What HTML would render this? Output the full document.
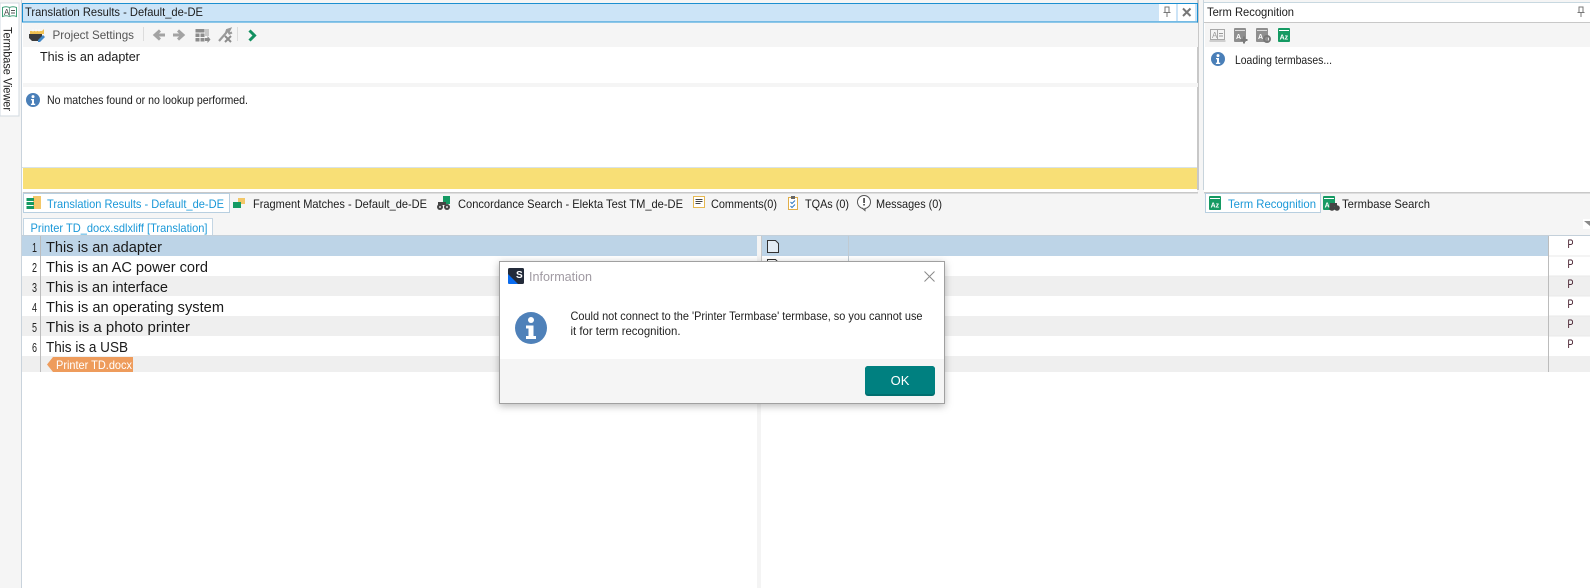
<!DOCTYPE html>
<html lang="en">
<head>
<meta charset="utf-8">
<title>Translation Results</title>
<style>
html,body{margin:0;padding:0;background:#fff;width:1590px;height:588px;overflow:hidden}
svg{display:block}
text{font-family:"Liberation Sans",sans-serif;font-size:12px;fill:#1c1c1c;white-space:pre}
.row{font-size:15px;fill:#1a1a1a}
.num{font-size:13px;fill:#222}
.blue{fill:#1a98d8}
.p{font-size:12px;fill:#3a1020}
</style>
</head>
<body>
<svg width="1590" height="588" viewBox="0 0 1590 588" xmlns="http://www.w3.org/2000/svg">
<defs>
<filter id="sh" x="-5%" y="-15%" width="110%" height="130%"><feDropShadow dx="0" dy="2" stdDeviation="4" flood-color="#000" flood-opacity=".28"/></filter>
<g id="inf"><circle cx="7" cy="7" r="7" fill="#4a7fb8"/><circle cx="7" cy="3.6" r="1.5" fill="#fff"/><path d="M5 6h3v4.600h1.200V12H4.900v-1.400H6V7.200H5z" fill="#fff"/></g>
<g id="pin"><path d="M-2.500 0h5M-2 0v5.500h4V0M-3.500 5.500h7M0 5.500v4.500" fill="none" stroke="#777" stroke-width="1"/></g>
<g id="gtb"><rect x="0" y="0" width="12" height="14" rx="1" fill="#159a63"/><rect x="1" y="2" width="10" height="1" fill="#fff"/><text x="1.600" y="11.500" style="font-size:7px;fill:#fff;font-weight:bold">Az</text></g>
</defs>

<!-- backgrounds -->
<rect width="1590" height="588" fill="#fff"/>
<rect x="0" y="0" width="21" height="588" fill="#f5f5f5"/>
<rect x="0" y="0" width="1590" height="3" fill="#f5f5f5"/>
<rect x="21" y="0" width="1" height="588" fill="#c9d3dc"/>
<rect x="1198" y="0" width="5" height="193" fill="#f5f5f5"/>
<rect x="1197" y="0" width="2" height="193" fill="#c8c8c8"/>
<rect x="1203" y="0" width="1" height="193" fill="#c8d4dc"/>

<!-- side tab -->
<rect x="0" y="3" width="19" height="113" fill="#fff" stroke="#d2dae0"/>
<path d="M2.500 7.500q3.500-1.500 7 0q3.500-1.500 7 0v9q-3.500-1.500-7 0q-3.500-1.500-7 0z" fill="#fff" stroke="#3f9f78"/>
<path d="M9.500 7.500v9" stroke="#7fa898"/>
<text x="4" y="15" style="font-size:8px;fill:#444">A</text>
<path d="M11 10.500h4M11 13h4" stroke="#555" fill="none"/>
<text transform="translate(3.500,27) rotate(90)" textLength="84" lengthAdjust="spacingAndGlyphs">Termbase Viewer</text>

<!-- Translation Results panel header -->
<rect x="22.500" y="3.500" width="1175" height="18.500" fill="#cce4f7" stroke="#1b8fd0"/>
<text x="25" y="16" textLength="178" lengthAdjust="spacingAndGlyphs">Translation Results - Default_de-DE</text>
<rect x="1159" y="4" width="17" height="17" fill="#fff"/>
<rect x="1178" y="4" width="17" height="17" fill="#fff"/>
<use href="#pin" x="1167" y="7"/>
<path d="M1183 8.500l7.500 7.500M1190.500 8.500l-7.500 7.500" stroke="#777" stroke-width="2" fill="none"/>

<!-- toolbar -->
<rect x="23" y="23" width="1175" height="24" fill="#f5f5f5"/>
<path d="M30 31h12l2-2v5H30z" fill="#f0c050"/><path d="M33 29.500v2M36 29.500v2M39 29.500v2" stroke="#fff"/>
<path d="M29 34h13v3l-2 4H32l-3-3z" fill="#3c3c3c"/>
<path d="M38 40l5-5 2 2-5 5h-2z" fill="#3f86c6"/>
<text x="52.500" y="39" textLength="81.500" lengthAdjust="spacingAndGlyphs" style="fill:#555">Project Settings</text>
<rect x="143" y="27" width="1" height="14" fill="#dcdcdc"/>
<path d="M165 35h-9M160 30.500l-5 4.500 5 4.500" fill="none" stroke="#a3a3a3" stroke-width="3"/>
<path d="M173 35h9M178 30.500l5 4.500-5 4.500" fill="none" stroke="#a3a3a3" stroke-width="3"/>
<g fill="#8c8c8c"><rect x="195.500" y="29" width="9" height="3.500"/><rect x="195.500" y="33.500" width="4" height="3.500"/><rect x="200.500" y="33.500" width="4" height="3.500"/><rect x="195.500" y="38" width="4" height="3.500"/><rect x="200.500" y="38" width="4" height="3.500"/><path d="M205 29h4v7h-4z" fill="#c8c8c8"/><path d="M205 38h2.500v-2l3 3.500-3 3.500v-2H205z"/></g>
<path d="M219 41l7-8 1-3 3-1-1.500 3 1 1.500 2.500-1" fill="none" stroke="#9a9a9a" stroke-width="2.200"/>
<path d="M225 36l6 6M231 36l-6 6" stroke="#8c8c8c" stroke-width="2"/>
<rect x="237" y="27" width="1" height="14" fill="#dcdcdc"/>
<path d="M249.500 30.500l5 5-5 5" fill="none" stroke="#129060" stroke-width="3"/>

<!-- Translation Results body -->
<text x="40" y="61" textLength="100" lengthAdjust="spacingAndGlyphs" style="font-size:13px">This is an adapter</text>
<rect x="23" y="83" width="1175" height="4" fill="#f5f5f5"/>
<use href="#inf" x="26" y="93"/>
<text x="47" y="104" textLength="201" lengthAdjust="spacingAndGlyphs">No matches found or no lookup performed.</text>
<rect x="22" y="167" width="1175" height="1" fill="#d8e3ea"/>
<rect x="23" y="168" width="1174" height="21" fill="#f8df76"/>

<!-- Term Recognition panel -->
<rect x="1204" y="3" width="386" height="19" fill="#fff"/>
<rect x="1204" y="2" width="386" height="1" fill="#c8d8e0"/>
<rect x="1204" y="22" width="386" height="1" fill="#c8c8c8"/>
<text x="1207" y="16" textLength="87" lengthAdjust="spacingAndGlyphs">Term Recognition</text>
<use href="#pin" x="1581" y="7"/>
<rect x="1205" y="23" width="385" height="24" fill="#f5f5f5"/>
<path d="M1210.500 29.500h7v10h-7zM1217.500 29.500h7v10h-7zM1209.500 41h16" fill="none" stroke="#a8a8a8"/>
<text x="1212" y="38" style="font-size:8px;fill:#999">A</text>
<path d="M1219 33.500h4M1219 36h4" stroke="#999"/>
<rect x="1234" y="28" width="12" height="14" rx="1" fill="#8f8f8f"/><rect x="1235" y="30" width="10" height="1" fill="#ddd"/>
<text x="1236" y="39" style="font-size:7px;fill:#fff;font-weight:bold">A</text>
<path d="M1243 36.500h2v2.500h2.500v2H1245v2.500h-2V41h-2.500v-2h2.500z" fill="#7a7a7a"/>
<rect x="1256" y="28" width="12" height="14" rx="1" fill="#8f8f8f"/><rect x="1257" y="30" width="10" height="1" fill="#ddd"/>
<text x="1258" y="39" style="font-size:7px;fill:#fff;font-weight:bold">A</text>
<circle cx="1267" cy="39" r="3" fill="none" stroke="#777" stroke-width="2"/>
<use href="#gtb" x="1278" y="28"/>
<use href="#inf" x="1211" y="52"/>
<text x="1235" y="64" textLength="97" lengthAdjust="spacingAndGlyphs">Loading termbases...</text>

<!-- tabs area -->
<rect x="0" y="190" width="1590" height="46" fill="#f5f5f5"/>
<rect x="21" y="190" width="1" height="46" fill="#c9d3dc"/>
<rect x="22" y="189" width="1175" height="3" fill="#fff"/>
<rect x="23" y="192" width="1175" height="1.500" fill="#c8c8c8"/>
<rect x="1204" y="190" width="386" height="3" fill="#fff"/>
<rect x="1204" y="192" width="386" height="1.500" fill="#c8c8c8"/>

<rect x="23.500" y="193.500" width="206" height="19" fill="#fff" stroke="#b8cfe0"/>
<rect x="33" y="196" width="8" height="13" fill="#f3c868"/>
<g fill="#159a63"><rect x="26.500" y="198" width="7.500" height="3"/><rect x="26.500" y="202" width="7.500" height="3"/><rect x="26.500" y="206" width="7.500" height="3"/></g>
<text x="47" y="208" textLength="177" lengthAdjust="spacingAndGlyphs" class="blue">Translation Results - Default_de-DE</text>

<rect x="238" y="198" width="7" height="6" fill="#f3c868"/><rect x="233" y="202" width="8" height="6" fill="#159a63"/>
<text x="253" y="208" textLength="174" lengthAdjust="spacingAndGlyphs">Fragment Matches - Default_de-DE</text>

<rect x="443" y="196" width="7" height="8" fill="#159a63"/>
<g fill="#444"><circle cx="440" cy="207" r="3"/><circle cx="447" cy="207" r="3"/><rect x="438" y="202" width="8" height="3"/></g>
<circle cx="440" cy="207" r="1" fill="#ddd"/><circle cx="447" cy="207" r="1" fill="#ddd"/>
<text x="458" y="208" textLength="225" lengthAdjust="spacingAndGlyphs">Concordance Search - Elekta Test TM_de-DE</text>

<rect x="693.500" y="196.500" width="11" height="11" fill="#fff" stroke="#e6b850"/>
<path d="M695.500 199.500h7M695.500 201.500h7M695.500 203.500h5" stroke="#444"/>
<text x="711" y="208" textLength="66" lengthAdjust="spacingAndGlyphs">Comments(0)</text>

<rect x="788.500" y="197.500" width="9" height="12" fill="#fff" stroke="#e0ae48"/>
<rect x="791" y="196" width="4" height="3" fill="#666"/>
<path d="M790.500 202l1.500 1.500 3-3M790.500 206l1.500 1.500 3-3" fill="none" stroke="#2f78c0"/>
<text x="805" y="208" textLength="44" lengthAdjust="spacingAndGlyphs">TQAs (0)</text>

<circle cx="864" cy="202" r="6.500" fill="#fff" stroke="#555"/>
<path d="M862 208l3 2.500v-2" fill="#fff" stroke="#555"/>
<rect x="863.300" y="198" width="1.500" height="5" fill="#333"/><rect x="863.300" y="204" width="1.500" height="1.500" fill="#333"/>
<text x="876" y="208" textLength="66" lengthAdjust="spacingAndGlyphs">Messages (0)</text>

<rect x="1205.500" y="193.500" width="115" height="19" fill="#fff" stroke="#b8cfe0"/>
<use href="#gtb" x="1209" y="196"/>
<text x="1228" y="208" textLength="88" lengthAdjust="spacingAndGlyphs" class="blue">Term Recognition</text>
<use href="#gtb" x="1323" y="196"/>
<g fill="#444"><circle cx="1332" cy="208" r="2.800"/><circle cx="1337" cy="208" r="2.800"/><rect x="1330" y="203" width="7" height="3"/></g>
<text x="1342" y="208" textLength="88" lengthAdjust="spacingAndGlyphs">Termbase Search</text>

<!-- document tab -->
<rect x="23.500" y="218.500" width="189" height="18" fill="#fff" stroke="#c4d6e4"/>
<text x="30.500" y="232" textLength="177" lengthAdjust="spacingAndGlyphs" class="blue">Printer TD_docx.sdlxliff [Translation]</text>

<rect x="1583" y="219" width="7" height="10" fill="#fff"/>
<path d="M1584 221h6v5z" fill="#8a8a8a"/>

<!-- grid -->
<rect x="22" y="235" width="1568" height="1" fill="#c4d0da"/>
<rect x="22" y="236" width="1526" height="20" fill="#bdd4e7"/>
<rect x="22" y="276" width="1568" height="20" fill="#efefef"/>
<rect x="22" y="316" width="1568" height="20" fill="#efefef"/>
<rect x="22" y="356" width="1568" height="16" fill="#efefef"/>
<rect x="40" y="236" width="1" height="136" fill="#bcbcbc"/>
<rect x="757" y="236" width="4" height="352" fill="#f4f4f4"/>
<rect x="761" y="236" width="1" height="136" fill="#c8c8c8"/>
<rect x="848" y="236" width="1" height="136" fill="#c0cad2"/>
<rect x="1548" y="236" width="1" height="136" fill="#bcbcbc"/>
<path d="M1549 256h41M1549 276h41M1549 296h41M1549 316h41M1549 336h41" stroke="#e8e8e8"/>

<path d="M767.500 240.500h8l3 3v9h-11z" fill="#e4edf5" stroke="#333"/>
<path d="M767.500 259.500h8l3 3v9h-11z" fill="#fff" stroke="#333"/>

<text class="num" x="32" y="252" textLength="5" lengthAdjust="spacingAndGlyphs">1</text>
<text class="num" x="32" y="272" textLength="5" lengthAdjust="spacingAndGlyphs">2</text>
<text class="num" x="32" y="292" textLength="5" lengthAdjust="spacingAndGlyphs">3</text>
<text class="num" x="32" y="312" textLength="5" lengthAdjust="spacingAndGlyphs">4</text>
<text class="num" x="32" y="332" textLength="5" lengthAdjust="spacingAndGlyphs">5</text>
<text class="num" x="32" y="352" textLength="5" lengthAdjust="spacingAndGlyphs">6</text>

<text class="row" x="46" y="252" textLength="116" lengthAdjust="spacingAndGlyphs">This is an adapter</text>
<text class="row" x="46" y="272" textLength="162" lengthAdjust="spacingAndGlyphs">This is an AC power cord</text>
<text class="row" x="46" y="292" textLength="122" lengthAdjust="spacingAndGlyphs">This is an interface</text>
<text class="row" x="46" y="312" textLength="178" lengthAdjust="spacingAndGlyphs">This is an operating system</text>
<text class="row" x="46" y="332" textLength="144" lengthAdjust="spacingAndGlyphs">This is a photo printer</text>
<text class="row" x="46" y="352" textLength="82" lengthAdjust="spacingAndGlyphs">This is a USB</text>

<path d="M47 364.500l6-7.500h80v15H53z" fill="#ee9c5c"/>
<text x="56" y="369" textLength="76" lengthAdjust="spacingAndGlyphs" style="fill:#fff">Printer TD.docx</text>

<text class="p" x="1567.500" y="248" textLength="6" lengthAdjust="spacingAndGlyphs">P</text>
<text class="p" x="1567.500" y="268" textLength="6" lengthAdjust="spacingAndGlyphs">P</text>
<text class="p" x="1567.500" y="288" textLength="6" lengthAdjust="spacingAndGlyphs">P</text>
<text class="p" x="1567.500" y="308" textLength="6" lengthAdjust="spacingAndGlyphs">P</text>
<text class="p" x="1567.500" y="328" textLength="6" lengthAdjust="spacingAndGlyphs">P</text>
<text class="p" x="1567.500" y="348" textLength="6" lengthAdjust="spacingAndGlyphs">P</text>

<!-- dialog -->
<rect x="499.500" y="261.500" width="445" height="142" fill="#fff" stroke="#a0a0a0" filter="url(#sh)"/>
<rect x="500" y="359" width="444" height="44" fill="#f5f5f5"/>
<rect x="508" y="268" width="16" height="16" rx="1.500" fill="#232b3a"/>
<path d="M508 274l10 10h-8.500a1.500 1.500 0 0 1-1.500-1.500z" fill="#0a6cf0"/>
<text x="516" y="278" style="font-size:10px;font-weight:bold;fill:#fff">S</text>
<text x="529" y="281" textLength="63" lengthAdjust="spacingAndGlyphs" style="font-size:13px;fill:#a09aa2">Information</text>
<path d="M924.500 271.500l10 10M934.500 271.500l-10 10" stroke="#8a8a8a" fill="none"/>
<circle cx="531" cy="328" r="16" fill="#4f81b9"/>
<circle cx="531" cy="320" r="3" fill="#fff"/>
<path d="M526 325.500h7.500V336h2.500v3h-10v-3h2.500v-7.500H526z" fill="#fff"/>
<text x="570.500" y="320" textLength="352" lengthAdjust="spacingAndGlyphs" style="fill:#222">Could not connect to the 'Printer Termbase' termbase, so you cannot use</text>
<text x="570.500" y="335" textLength="110" lengthAdjust="spacingAndGlyphs" style="fill:#222">it for term recognition.</text>
<rect x="865" y="366" width="70" height="30" rx="3" fill="#006f6f"/>
<rect x="865" y="366" width="70" height="28" rx="3" fill="#008080"/>
<text x="900" y="385" text-anchor="middle" style="font-size:13px;fill:#fff">OK</text>
</svg>
</body>
</html>
